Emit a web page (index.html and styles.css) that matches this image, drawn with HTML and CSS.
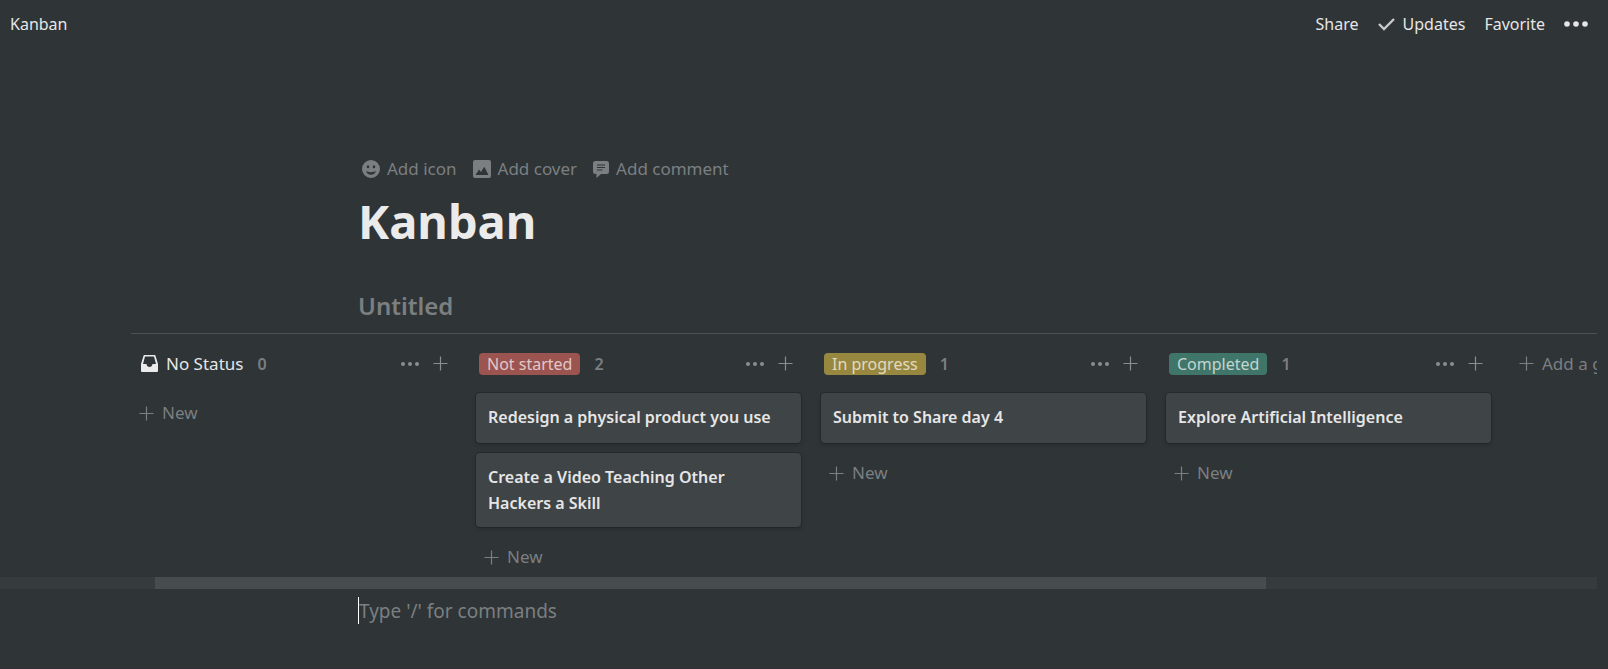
FILE: index.html
```
<!DOCTYPE html>
<html lang="en">
<head>
    <meta charset="UTF-8">
    <meta name="viewport" content="width=device-width, initial-scale=1.0">
    <title>Kanban</title>
    <link rel="stylesheet" href="styles.css">
</head>
<body>
    <!-- shared icons -->
    <svg class="sprite" aria-hidden="true">
        <symbol id="plus" viewBox="0 0 16 16"><path d="M8 0.5v15M0.5 8h15" stroke="currentColor" stroke-width="1.3"/></symbol>
        <symbol id="dots" viewBox="0 0 18 4"><circle cx="2" cy="2" r="2"/><circle cx="9" cy="2" r="2"/><circle cx="16" cy="2" r="2"/></symbol>
    </svg>

    <header class="topbar">
        <a class="breadcrumb" href="#">Kanban</a>
        <nav class="actions">
            <button class="share">Share</button>
            <button class="updates">
                <svg width="17" height="13" viewBox="0 0 17 13"><path d="M1 6l5 5L16 1" fill="none" stroke="currentColor" stroke-width="2.4"/></svg>
                Updates
            </button>
            <button class="favorite">Favorite</button>
            <button class="more" aria-label="More"><svg width="24" height="6" viewBox="0 0 24 6"><circle cx="3" cy="3" r="2.8"/><circle cx="12" cy="3" r="2.8"/><circle cx="21" cy="3" r="2.8"/></svg></button>
        </nav>
    </header>

    <main>
        <div class="content">
            <div class="page-controls">
                <button>
                    <svg width="18" height="18" viewBox="0 0 18 18"><path fill-rule="evenodd" d="M9 0a9 9 0 1 0 0 18A9 9 0 0 0 9 0zM6 5.2a1.3 1.5 0 1 1 0 3a1.3 1.5 0 0 1 0-3zM12 5.2a1.3 1.5 0 1 1 0 3a1.3 1.5 0 0 1 0-3zM4 10.8c1.2 1 2.800 1.400 5 1.400s3.800-.4 5-1.400c-.6 2.600-2.500 4-5 4s-4.400-1.400-5-4z"/></svg>
                    Add icon
                </button>
                <button>
                    <svg width="18" height="18" viewBox="0 0 18 18"><path fill-rule="evenodd" d="M2 0h14a2 2 0 0 1 2 2v14a2 2 0 0 1-2 2H2a2 2 0 0 1-2-2V2a2 2 0 0 1 2-2zM2.500 15h13l-4.200-8.200-3.300 5.200-2-2.500z"/></svg>
                    Add cover
                </button>
                <button>
                    <svg width="16" height="17" viewBox="0 0 16 17"><path fill-rule="evenodd" d="M2.500 0h11A2.500 2.500 0 0 1 16 2.500v8a2.500 2.500 0 0 1-2.500 2.500H8l-4.500 4v-4h-1A2.500 2.500 0 0 1 0 10.500v-8A2.500 2.500 0 0 1 2.500 0zM4 3.500v1h8v-1zM4 6v1h8V6zM4 8.500v1h5.500v-1z"/></svg>
                    Add comment
                </button>
            </div>
            <h1>Kanban</h1>
            <h2>Untitled</h2>
        </div>

        <section class="board">
            <div class="columns">
                <div class="column">
                    <div class="column-head">
                        <svg class="inbox" width="17" height="17" viewBox="0 0 17 17"><path fill-rule="evenodd" d="M3.500 0h10a1 1 0 0 1 1 .8L17 9v7a1 1 0 0 1-1 1H1a1 1 0 0 1-1-1V9L2.500 .8a1 1 0 0 1 1-.8zM4 1.500L2 9h3.500c.3 2 1.300 3 3 3s2.700-1 3-3H15l-2-7.500z"/></svg>
                        <span class="no-status">No Status</span>
                        <span class="count">0</span>
                        <button class="options" aria-label="Options"><svg width="18" height="4"><use href="#dots"/></svg></button>
                        <button aria-label="Add card"><svg width="15" height="15"><use href="#plus"/></svg></button>
                    </div>
                    <button class="new"><svg width="15" height="15"><use href="#plus"/></svg>New</button>
                </div>

                <div class="column">
                    <div class="column-head">
                        <span class="tag red">Not started</span>
                        <span class="count">2</span>
                        <button class="options" aria-label="Options"><svg width="18" height="4"><use href="#dots"/></svg></button>
                        <button aria-label="Add card"><svg width="15" height="15"><use href="#plus"/></svg></button>
                    </div>
                    <a class="card" href="#">Redesign a physical product you use</a>
                    <a class="card" href="#">Create a Video Teaching Other Hackers a Skill</a>
                    <button class="new"><svg width="15" height="15"><use href="#plus"/></svg>New</button>
                </div>

                <div class="column">
                    <div class="column-head">
                        <span class="tag yellow">In progress</span>
                        <span class="count">1</span>
                        <button class="options" aria-label="Options"><svg width="18" height="4"><use href="#dots"/></svg></button>
                        <button aria-label="Add card"><svg width="15" height="15"><use href="#plus"/></svg></button>
                    </div>
                    <a class="card" href="#">Submit to Share day 4</a>
                    <button class="new"><svg width="15" height="15"><use href="#plus"/></svg>New</button>
                </div>

                <div class="column">
                    <div class="column-head">
                        <span class="tag green">Completed</span>
                        <span class="count">1</span>
                        <button class="options" aria-label="Options"><svg width="18" height="4"><use href="#dots"/></svg></button>
                        <button aria-label="Add card"><svg width="15" height="15"><use href="#plus"/></svg></button>
                    </div>
                    <a class="card" href="#">Explore Artificial Intelligence</a>
                    <button class="new"><svg width="15" height="15"><use href="#plus"/></svg>New</button>
                </div>

                <div class="column">
                    <div class="column-head">
                        <button class="new"><svg width="15" height="15"><use href="#plus"/></svg>Add a group</button>
                    </div>
                </div>
            </div>
            <div class="scrollbar"><div class="thumb"></div></div>
        </section>

        <div class="content">
            <input class="command" type="text" placeholder="Type '/' for commands" aria-label="Block text">
        </div>
    </main>
</body>
</html>
```
FILE: styles.css
```
* {
    margin: 0;
    padding: 0;
    box-sizing: border-box;
}
body {
    font-family: 'Noto Sans', 'Open Sans', sans-serif;
    font-size: 16px;
    line-height: 26px;
    color: #e6e6e6;
    background: #2f3437;
    min-height: 100vh;
    border-bottom: 1px solid #332f37;
    overflow-x: hidden;
}
button {
    font: inherit;
    color: inherit;
    background: none;
    border: none;
    cursor: pointer;
    display: flex;
    align-items: center;
    white-space: nowrap;
}
a {
    color: inherit;
    text-decoration: none;
}
svg {
    fill: currentColor;
    flex-shrink: 0;
}
.sprite {
    display: none;
}

/* top bar */
.topbar {
    display: flex;
    justify-content: space-between;
    align-items: center;
    height: 48px;
    padding: 0 20px 0 10px;
}
.actions {
    display: flex;
    align-items: center;
    gap: 19px;
}
.updates {
    gap: 8px;
}
.updates svg {
    color: #c8c9ca;
}

/* page heading */
main {
    padding-right: 11px;
}
.content {
    width: 100%;
    max-width: 881px;
    margin: 0 auto;
}
.page-controls {
    display: flex;
    gap: 16px;
    padding: 108px 0 0 4px;
    font-size: 17px;
    color: #7b7f81;
}
.page-controls button {
    gap: 7px;
}
h1 {
    font-size: 47px;
    font-weight: 700;
    line-height: 60px;
    margin-top: 9px;
    color: #ebebeb;
}
h2 {
    font-size: 24px;
    font-weight: 600;
    line-height: 32px;
    margin-top: 39px;
    color: #7b7f81;
}

/* board */
.board {
    margin-top: 11px;
    overflow: hidden;
}
.columns {
    display: flex;
    gap: 20px;
    margin-left: 131px;
    border-top: 1px solid #4d5153;
}
.column {
    flex: 0 0 325px;
}
.column-head {
    display: flex;
    align-items: center;
    height: 59px;
    padding: 0 8px 0 3px;
    color: #8b8e90;
}
.inbox {
    margin: 0 8px 0 7px;
    color: #ebebeb;
}
.no-status {
    font-size: 17px;
    color: #e6e6e6;
}
.tag {
    height: 22px;
    line-height: 22px;
    padding: 0 8px;
    border-radius: 4px;
    overflow: hidden;
}
.red {
    background: #9c5451;
    color: #e0c8c7;
}
.yellow {
    background: #98883f;
    color: #e0dbc0;
}
.green {
    background: #40756a;
    color: #c2d6d1;
}
.count {
    margin-left: 14px;
    font-weight: 600;
    color: #7b7f81;
}
.options {
    margin: 0 14px 0 auto;
}
.card {
    display: block;
    min-height: 50px;
    padding: 11px 12px;
    margin-bottom: 10px;
    background: #3f4447;
    border-radius: 4px;
    box-shadow: 0 0 0 1px rgba(15, 15, 15, 0.2), 0 2px 4px rgba(15, 15, 15, 0.2);
    font-weight: 600;
}
.new {
    height: 40px;
    padding-left: 8px;
    gap: 8px;
    font-size: 17px;
    color: #7b7f81;
}
.column-head .new {
    padding-left: 5px;
}
.scrollbar {
    height: 12px;
    background: #363b3d;
}
.thumb {
    width: 69.6%;
    height: 100%;
    margin-left: 9.7%;
    background: #474c4f;
}

/* empty block with the cursor in it */
.command {
    display: block;
    width: 100%;
    height: 27px;
    margin-top: 8px;
    font: inherit;
    font-size: 19px;
    color: #e6e6e6;
    background: none;
    border: none;
    border-left: 1px solid #ffffff;
    outline: none;
}
.command::placeholder {
    color: #7b7f81;
    opacity: 1;
}
```
